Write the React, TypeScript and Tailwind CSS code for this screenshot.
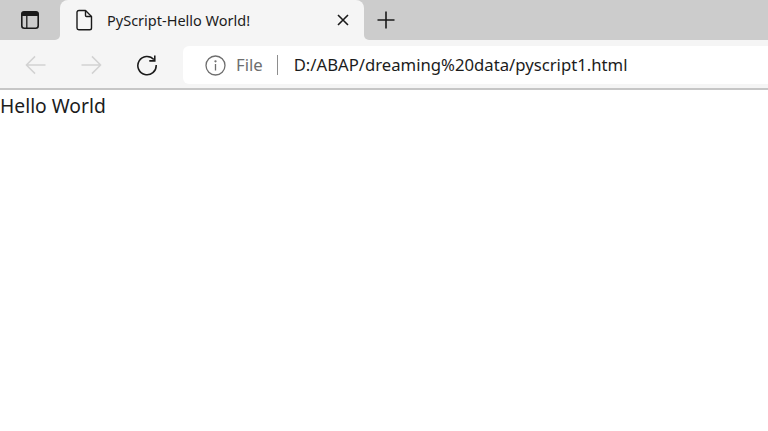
import React from "react";

const font = "font-['Noto_Sans','Open_Sans',sans-serif]";

const App = () => {
  return (
    <div className={`w-[768px] h-[431px] overflow-hidden bg-white text-[#1c1c1c] ${font}`}>
      {/* Tab strip */}
      <div className="flex h-[40px] bg-[#f5f5f5]">
        <div className="flex w-[60px] items-center justify-center rounded-br-[5px] bg-[#cccccc]">
          <svg width="20" height="20" viewBox="0 0 20 20" fill="none" stroke="#1a1a1a">
            <rect x="1.800" y="1.800" width="16.400" height="16.400" rx="2.500" strokeWidth="1.600" />
            <path d="M1.500 4 a2.500 2.500 0 0 1 2.500 -2.500 h12 a2.500 2.500 0 0 1 2.500 2.500 V6 H1.500 Z" fill="#1a1a1a" stroke="none" />
            <path d="M6.800 6 V18" strokeWidth="1.300" />
          </svg>
        </div>
        <div className="w-[304px] bg-[#cccccc]">
          <div className="flex h-full items-center rounded-t-[8px] bg-[#f5f5f5] pl-[14px] pr-[14px]">
            <svg width="20" height="22" viewBox="0 0 20 22" fill="none" stroke="#1a1a1a" strokeWidth="1.400" strokeLinejoin="round">
              <path d="M3 3 a2 2 0 0 1 2 -1.500 h6.500 l6 6 V19 a1.800 1.800 0 0 1 -1.800 1.800 H4.800 A1.800 1.800 0 0 1 3 19 Z" />
              <path d="M11.500 1.500 V6.500 a1 1 0 0 0 1 1 H17.500" />
            </svg>
            <span className="ml-[13px] text-[14.500px] leading-none">PyScript-Hello World!</span>
            <svg className="ml-auto" width="14" height="14" viewBox="0 0 14 14" stroke="#1a1a1a" strokeWidth="1.600">
              <path d="M2 2 L12 12 M12 2 L2 12" />
            </svg>
          </div>
        </div>
        <div className="flex flex-1 items-center rounded-bl-[5px] bg-[#cccccc] pl-[12px]">
          <svg width="20" height="20" viewBox="0 0 20 20" stroke="#1a1a1a" strokeWidth="1.600">
            <path d="M10 1.500 V18.500 M1.500 10 H18.500" />
          </svg>
        </div>
      </div>

      {/* Toolbar */}
      <div className="flex h-[50px] items-center border-b-2 border-[#c6c6c6] bg-[#f5f5f5] pt-[2px]">
        <div className="flex w-[183px] items-center pl-[24px]">
          <svg width="23" height="20" viewBox="0 0 24 22" fill="none" stroke="#d2d2d2" strokeWidth="1.600">
            <path d="M23 11 H2 M11.500 1.500 L2 11 L11.500 20.500" />
          </svg>
          <svg className="ml-[33px]" width="23" height="20" viewBox="0 0 24 22" fill="none" stroke="#d2d2d2" strokeWidth="1.600">
            <path d="M1 11 H22 M12.500 1.500 L22 11 L12.500 20.500" />
          </svg>
          <svg className="ml-[33px]" width="22" height="22" viewBox="0 0 24 24" fill="none" stroke="#1a1a1a" strokeWidth="1.700">
            <path d="M19.500 6 A10 10 0 1 0 22 12" />
            <path d="M20.500 1.500 V7.500 H14.500" />
          </svg>
        </div>
        <div className="flex h-[38px] flex-1 items-center rounded-l-[6px] bg-white pl-[22px]">
          <svg width="21" height="21" viewBox="0 0 21 21" fill="none" stroke="#6e6e6e" strokeWidth="1.300">
            <circle cx="10.500" cy="10.500" r="9.500" />
            <path d="M10.500 9 V15.500" />
            <circle cx="10.500" cy="6.300" r="0.500" />
          </svg>
          <span className="ml-[10px] text-[16.700px] leading-none text-[#6e6e6e]">File</span>
          <div className="ml-[14px] h-[20px] w-[1px] bg-[#8e8e8e]" />
          <span className="ml-[16px] text-[16.700px] leading-none">D:/ABAP/dreaming%20data/pyscript1.html</span>
        </div>
      </div>

      {/* Page */}
      <p className="text-[19.300px] leading-[31px]">Hello World</p>
    </div>
  );
};

export default App;
